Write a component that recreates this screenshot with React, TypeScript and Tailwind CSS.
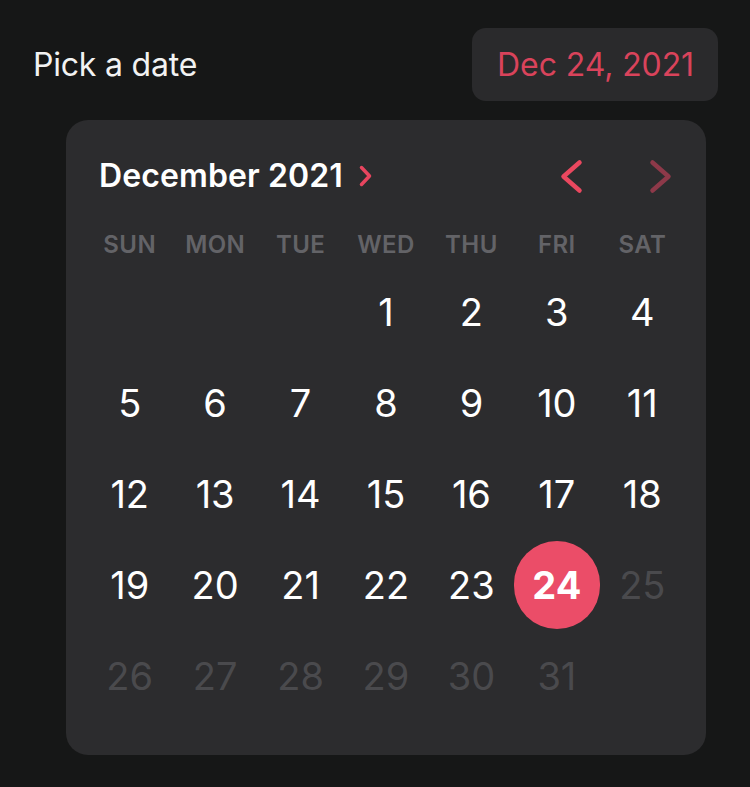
import React from 'react';

const days = ['SUN', 'MON', 'TUE', 'WED', 'THU', 'FRI', 'SAT'];

// Dec 2021 starts on a Wednesday; 25..31 are shown dimmed (past the max date)
const cells: (number | null)[] = [null, null, null, ...Array.from({ length: 31 }, (_, i) => i + 1)];

const Chevron: React.FC<{ dir: 'left' | 'right'; className?: string; w: number; h: number; sw: number }> = ({ dir, className, w, h, sw }) => (
  <svg width={w} height={h} viewBox={`0 0 ${w} ${h}`} className={className} fill="none">
    {dir === 'left' ? (
      <polyline points={`${w - sw},${sw} ${sw},${h / 2} ${w - sw},${h - sw}`} stroke="currentColor" strokeWidth={sw} strokeLinecap="round" strokeLinejoin="round" />
    ) : (
      <polyline points={`${sw},${sw} ${w - sw},${h / 2} ${sw},${h - sw}`} stroke="currentColor" strokeWidth={sw} strokeLinecap="round" strokeLinejoin="round" />
    )}
  </svg>
);

export default function App() {
  const selected = 24;

  return (
    <div className="min-h-[787px] bg-[#161717] font-['Inter','Liberation_Sans',sans-serif] text-white">
      <div className="flex items-center justify-between pl-[33px] pr-[32px] pt-[28px]">
        <span className="text-[32px] leading-none text-[#f2f2f2] tracking-[-0.2px]">Pick a date</span>
        <button className="h-[73px] pl-[25px] pr-[24px] rounded-[14px] bg-[#2a2a2c] text-[32px] leading-none text-[#d9435b] tracking-[-0.1px]">
          Dec 24, 2021
        </button>
      </div>

      <div className="mt-[19px] ml-[66px] w-[640px] h-[635px] rounded-[22px] bg-[#2c2c2e] px-[21px] pt-[36px]">
        <div className="flex items-center h-[40px] pl-[12px] pr-[12px]">
          <span className="text-[32px] font-semibold leading-none tracking-[0.1px]">December 2021</span>
          <Chevron dir="right" w={15} h={24} sw={3.5} className="ml-[15px] text-[#e8455f]" />
          <div className="ml-auto flex items-center gap-[64px]">
            <Chevron dir="left" w={25} h={37} sw={4.5} className="text-[#ea485f]" />
            <Chevron dir="right" w={25} h={37} sw={4.5} className="text-[#8d3949]" />
          </div>
        </div>

        <div className="grid grid-cols-7 mt-[34px] h-[30px] items-center">
          {days.map((d) => (
            <div key={d} className="text-center text-[24px] font-semibold leading-none tracking-[0.4px] text-[#636367]">
              {d}
            </div>
          ))}
        </div>

        <div className="grid grid-cols-7 mt-[6px] auto-rows-[91px]">
          {cells.map((n, i) => (
            <div key={i} className="flex items-center justify-center">
              {n === null ? null : n === selected ? (
                <div className="w-[88px] h-[88px] rounded-full bg-[#eb4d68] flex items-center justify-center text-[38px] font-bold leading-none">
                  {n}
                </div>
              ) : (
                <span className={`text-[38px] leading-none ${n > selected ? 'text-[#4a4a4d]' : 'text-white'}`}>{n}</span>
              )}
            </div>
          ))}
        </div>
      </div>
    </div>
  );
}
